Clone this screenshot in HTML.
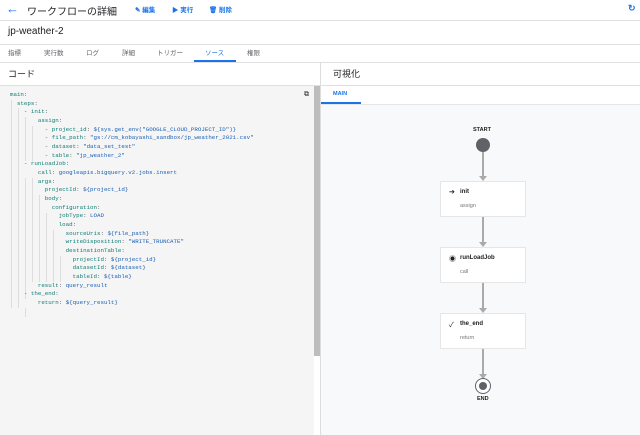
<!DOCTYPE html>
<html><head><meta charset="utf-8"><style>
*{margin:0;padding:0;box-sizing:border-box}
body{width:640px;height:435px;overflow:hidden;background:#fff;font-family:"Liberation Sans","Noto Sans CJK JP",sans-serif;position:relative;color:#202124}
.a{position:absolute;white-space:nowrap}
.hr{position:absolute;left:0;width:640px;height:1px;background:#e0e0e0}
.tab{position:absolute;top:47px;font-size:6.5px;color:#5f6368}
.btn{position:absolute;top:4px;font-size:6.5px;color:#1a73e8;font-weight:bold}
.code{position:absolute;left:0;top:86px;width:314px;height:349px;background:#f5f5f5}
.ln{position:absolute;font-family:"Liberation Mono",monospace;font-size:5.8px;white-space:pre;line-height:8.67px}
.k{color:#0d7c74}.v{color:#1a5fb4}.p{color:#555}
.g{position:absolute;width:1px;background:#ddd}
.box{position:absolute;left:440px;width:86px;height:36px;background:#fff;border:1px solid #e6e6e6}
.box b{position:absolute;left:19px;top:7px;font-size:6px}
.box span{position:absolute;left:19px;top:21px;font-size:5.5px;color:#777}
.ic{position:absolute;left:8px;top:6px;font-size:7px}
.vl{position:absolute;left:482px;width:2px;background:#aaa}
.ar{position:absolute;left:479px;width:0;height:0;border-left:4px solid transparent;border-right:4px solid transparent;border-top:5px solid #aaa}
</style></head><body>
<div class="a" style="left:6px;top:1px;font-size:13px;color:#1a73e8">←</div>
<div class="a" style="left:27px;top:3px;font-size:10px">ワークフローの詳細</div>
<div class="btn" style="left:135px">✎ 編集</div>
<div class="btn" style="left:172px">▶ 実行</div>
<div class="btn" style="left:209px">🗑 削除</div>
<div class="a" style="left:628px;top:3px;font-size:9px;color:#1a73e8;font-weight:bold">↻</div>
<div class="hr" style="top:20px"></div>
<div class="a" style="left:8px;top:26px;font-size:10px">jp-weather-2</div>
<div class="hr" style="top:44px"></div>
<div class="tab" style="left:8px">指標</div>
<div class="tab" style="left:44px">実行数</div>
<div class="tab" style="left:86px">ログ</div>
<div class="tab" style="left:122px">詳細</div>
<div class="tab" style="left:157px">トリガー</div>
<div class="tab" style="left:205px;color:#1a73e8">ソース</div>
<div class="tab" style="left:247px">権限</div>
<div class="a" style="left:194px;top:60px;width:42px;height:2px;background:#1a73e8"></div>
<div class="hr" style="top:62px"></div>
<div class="a" style="left:8px;top:67px;font-size:9px">コード</div>
<div class="a" style="left:320px;top:62px;width:1px;height:373px;background:#ddd"></div>
<div class="a" style="left:333px;top:67px;font-size:9px">可視化</div>
<div class="a" style="left:321px;top:85px;width:319px;height:1px;background:#e0e0e0"></div>
<div class="a" style="left:0;top:85px;width:320px;height:1px;background:#e0e0e0"></div>
<div class="a" style="left:333px;top:91px;font-size:5.5px;color:#1a73e8;font-weight:bold">MAIN</div>
<div class="a" style="left:321px;top:102px;width:40px;height:2px;background:#1a73e8"></div>
<div class="a" style="left:321px;top:104px;width:319px;height:331px;background:#f8f9fa;border-top:1px solid #e6e6e6"></div>
<div class="code">
<div class="a" style="left:314px;top:0;width:6px;height:270px;background:#bdbdbd"></div>
<div class="a" style="left:304px;top:5px;font-size:7px">⧉</div>
<div class="g" style="left:11px;top:14px;height:208px"></div>
<div class="g" style="left:18px;top:22px;height:200px"></div>
<div class="g" style="left:25px;top:31px;height:44px"></div>
<div class="g" style="left:32px;top:40px;height:35px"></div>
<div class="g" style="left:25px;top:92px;height:121px"></div>
<div class="g" style="left:32px;top:92px;height:104px"></div>
<div class="g" style="left:39px;top:109px;height:87px"></div>
<div class="g" style="left:46px;top:127px;height:69px"></div>
<div class="g" style="left:53px;top:144px;height:52px"></div>
<div class="g" style="left:60px;top:170px;height:26px"></div>
<div class="g" style="left:25px;top:222px;height:9px"></div>
</div>
<div class="ln" style="left:10px;top:91px"><span class="k">main</span><span class="p">:</span>
  <span class="k">steps</span><span class="p">:</span>
    <span class="p">-</span> <span class="k">init</span><span class="p">:</span>
        <span class="k">assign</span><span class="p">:</span>
          <span class="p">-</span> <span class="k">project_id</span><span class="p">:</span> <span class="v">${sys.get_env("GOOGLE_CLOUD_PROJECT_ID")}</span>
          <span class="p">-</span> <span class="k">file_path</span><span class="p">:</span> <span class="v">"gs://cm_kobayashi_sandbox/jp_weather_2021.csv"</span>
          <span class="p">-</span> <span class="k">dataset</span><span class="p">:</span> <span class="v">"data_set_test"</span>
          <span class="p">-</span> <span class="k">table</span><span class="p">:</span> <span class="v">"jp_weather_2"</span>
    <span class="p">-</span> <span class="k">runLoadJob</span><span class="p">:</span>
        <span class="k">call</span><span class="p">:</span> <span class="v">googleapis.bigquery.v2.jobs.insert</span>
        <span class="k">args</span><span class="p">:</span>
          <span class="k">projectId</span><span class="p">:</span> <span class="v">${project_id}</span>
          <span class="k">body</span><span class="p">:</span>
            <span class="k">configuration</span><span class="p">:</span>
              <span class="k">jobType</span><span class="p">:</span> <span class="v">LOAD</span>
              <span class="k">load</span><span class="p">:</span>
                <span class="k">sourceUris</span><span class="p">:</span> <span class="v">${file_path}</span>
                <span class="k">writeDisposition</span><span class="p">:</span> <span class="v">"WRITE_TRUNCATE"</span>
                <span class="k">destinationTable</span><span class="p">:</span>
                  <span class="k">projectId</span><span class="p">:</span> <span class="v">${project_id}</span>
                  <span class="k">datasetId</span><span class="p">:</span> <span class="v">${dataset}</span>
                  <span class="k">tableId</span><span class="p">:</span> <span class="v">${table}</span>
        <span class="k">result</span><span class="p">:</span> <span class="v">query_result</span>
    <span class="p">-</span> <span class="k">the_end</span><span class="p">:</span>
        <span class="k">return</span><span class="p">:</span> <span class="v">${query_result}</span></div>
<div class="a" style="left:473px;top:127px;font-size:5.5px;font-weight:bold">START</div>
<div class="a" style="left:476px;top:138px;width:14px;height:14px;border-radius:50%;background:#5f6368"></div>
<div class="vl" style="top:152px;height:24px"></div><div class="ar" style="top:176px"></div>
<div class="box" style="top:181px"><div class="ic">➔</div><b>init</b><span>assign</span></div>
<div class="vl" style="top:217px;height:25px"></div><div class="ar" style="top:242px"></div>
<div class="box" style="top:247px"><div class="ic">◉</div><b>runLoadJob</b><span>call</span></div>
<div class="vl" style="top:283px;height:25px"></div><div class="ar" style="top:308px"></div>
<div class="box" style="top:313px"><div class="ic">✓</div><b>the_end</b><span>return</span></div>
<div class="vl" style="top:349px;height:25px"></div><div class="ar" style="top:374px"></div>
<div class="a" style="left:475px;top:378px;width:16px;height:16px;border-radius:50%;border:1.5px solid #5f6368;background:#fff"></div>
<div class="a" style="left:479px;top:382px;width:8px;height:8px;border-radius:50%;background:#5f6368"></div>
<div class="a" style="left:477px;top:396px;font-size:5.5px;font-weight:bold">END</div>
</body></html>
